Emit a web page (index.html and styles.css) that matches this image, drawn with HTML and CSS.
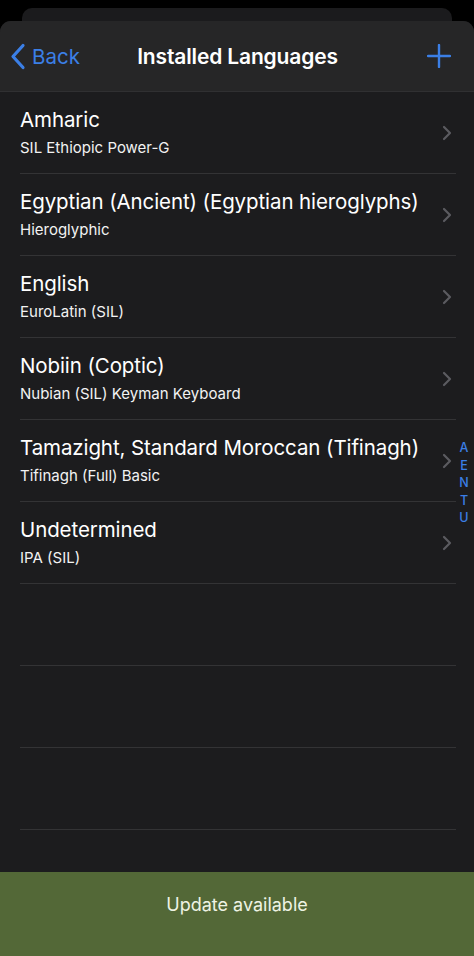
FILE: index.html
```html
<!DOCTYPE html>
<html lang="en">
<head>
    <meta charset="UTF-8">
    <meta name="viewport" content="width=device-width, initial-scale=1.0">
    <title>Installed Languages</title>
    <link rel="stylesheet" href="styles.css">
</head>
<body>
    <!-- Sheet stacked behind -->
    <div class="back-sheet"></div>

    <div class="sheet">
        <!-- Navigation Bar -->
        <div class="nav-bar">
            <div class="nav-back">
                <svg class="back-icon" width="16" height="27" viewBox="0 0 16 27">
                    <path d="M13 2.5 L3 13.5 L13 24.5" fill="none" stroke="#3b7fe6" stroke-width="3.2" stroke-linecap="round" stroke-linejoin="round"/>
                </svg>
                <span>Back</span>
            </div>
            <div class="nav-title">Installed Languages</div>
            <div class="nav-actions">
                <svg class="add-icon" width="24" height="24" viewBox="0 0 24 24">
                    <path d="M12 1 V23 M1 12 H23" fill="none" stroke="#3b7fe6" stroke-width="2.4" stroke-linecap="round"/>
                </svg>
            </div>
        </div>

        <!-- Language List -->
        <div class="list">
            <div class="row">
                <div class="row-text">
                    <div class="row-title">Amharic</div>
                    <div class="row-subtitle">SIL Ethiopic Power-G</div>
                </div>
                <svg class="chevron" width="10" height="16" viewBox="0 0 10 16"><path d="M2 2 L8 8 L2 14" fill="none" stroke="#5b5b60" stroke-width="2.2" stroke-linecap="round" stroke-linejoin="round"/></svg>
            </div>
            <div class="row">
                <div class="row-text">
                    <div class="row-title">Egyptian (Ancient) (Egyptian hieroglyphs)</div>
                    <div class="row-subtitle">Hieroglyphic</div>
                </div>
                <svg class="chevron" width="10" height="16" viewBox="0 0 10 16"><path d="M2 2 L8 8 L2 14" fill="none" stroke="#5b5b60" stroke-width="2.2" stroke-linecap="round" stroke-linejoin="round"/></svg>
            </div>
            <div class="row">
                <div class="row-text">
                    <div class="row-title">English</div>
                    <div class="row-subtitle">EuroLatin (SIL)</div>
                </div>
                <svg class="chevron" width="10" height="16" viewBox="0 0 10 16"><path d="M2 2 L8 8 L2 14" fill="none" stroke="#5b5b60" stroke-width="2.2" stroke-linecap="round" stroke-linejoin="round"/></svg>
            </div>
            <div class="row">
                <div class="row-text">
                    <div class="row-title">Nobiin (Coptic)</div>
                    <div class="row-subtitle">Nubian (SIL) Keyman Keyboard</div>
                </div>
                <svg class="chevron" width="10" height="16" viewBox="0 0 10 16"><path d="M2 2 L8 8 L2 14" fill="none" stroke="#5b5b60" stroke-width="2.2" stroke-linecap="round" stroke-linejoin="round"/></svg>
            </div>
            <div class="row">
                <div class="row-text">
                    <div class="row-title">Tamazight, Standard Moroccan (Tifinagh)</div>
                    <div class="row-subtitle">Tifinagh (Full) Basic</div>
                </div>
                <svg class="chevron" width="10" height="16" viewBox="0 0 10 16"><path d="M2 2 L8 8 L2 14" fill="none" stroke="#5b5b60" stroke-width="2.2" stroke-linecap="round" stroke-linejoin="round"/></svg>
            </div>
            <div class="row">
                <div class="row-text">
                    <div class="row-title">Undetermined</div>
                    <div class="row-subtitle">IPA (SIL)</div>
                </div>
                <svg class="chevron" width="10" height="16" viewBox="0 0 10 16"><path d="M2 2 L8 8 L2 14" fill="none" stroke="#5b5b60" stroke-width="2.2" stroke-linecap="round" stroke-linejoin="round"/></svg>
            </div>
            <div class="row"></div>
            <div class="row"></div>
            <div class="row"></div>

            <!-- Section index -->
            <div class="section-index">
                <span>A</span>
                <span>E</span>
                <span>N</span>
                <span>T</span>
                <span>U</span>
            </div>
        </div>

        <div class="update-bar">Update available</div>
    </div>
</body>
</html>
```

FILE: styles.css
```css
* {
    margin: 0;
    padding: 0;
    box-sizing: border-box;
}

body {
    font-family: Inter, "Liberation Sans", sans-serif;
    background: #000;
    height: 956px;
    overflow: hidden;
    color: #fff;
}

/* Stacked sheets */
.back-sheet {
    height: 13px;
    margin: 8px 22px 0;
    background: #1b1b1d;
    border-radius: 10px 10px 0 0;
}

.sheet {
    height: 935px;
    display: flex;
    flex-direction: column;
    background: #1c1c1e;
    border-radius: 11px 11px 0 0;
    overflow: hidden;
}

/* Navigation Bar */
.nav-bar {
    height: 71px;
    flex-shrink: 0;
    display: grid;
    grid-template-columns: 1fr auto 1fr;
    align-items: center;
    padding: 0 23px 0 10px;
    background: #262627;
    border-bottom: 1px solid #303032;
}

.nav-back {
    display: flex;
    align-items: center;
    gap: 6px;
    color: #3b7fe6;
    font-size: 20.5px;
}

.nav-title {
    font-size: 21px;
    font-weight: 600;
    letter-spacing: -0.15px;
    color: #fff;
    padding-left: 14px;
}

.nav-actions {
    display: flex;
    justify-content: flex-end;
}

/* List */
.list {
    flex: 1;
    position: relative;
}

.row {
    height: 82px;
    margin: 0 18px 0 20px;
    padding-right: 4px;
    display: flex;
    align-items: center;
    justify-content: space-between;
    border-bottom: 1px solid #333335;
}

.row-title {
    font-size: 20.5px;
    line-height: 24px;
    color: #fff;
    letter-spacing: -0.1px;
}

.row-subtitle {
    font-size: 15px;
    line-height: 20px;
    margin-top: 6px;
    color: #f2f2f2;
}

.chevron {
    flex-shrink: 0;
}

.section-index {
    position: absolute;
    top: 347px;
    right: 4px;
    width: 12px;
    display: flex;
    flex-direction: column;
    align-items: center;
    color: #3b7fe6;
    font-size: 12.5px;
    font-weight: 500;
    line-height: 17.5px;
}

/* Update banner */
.update-bar {
    height: 84px;
    flex-shrink: 0;
    display: flex;
    align-items: center;
    justify-content: center;
    padding-bottom: 20px;
    background: #536837;
    color: #eef3e4;
    font-size: 18px;
}
```
